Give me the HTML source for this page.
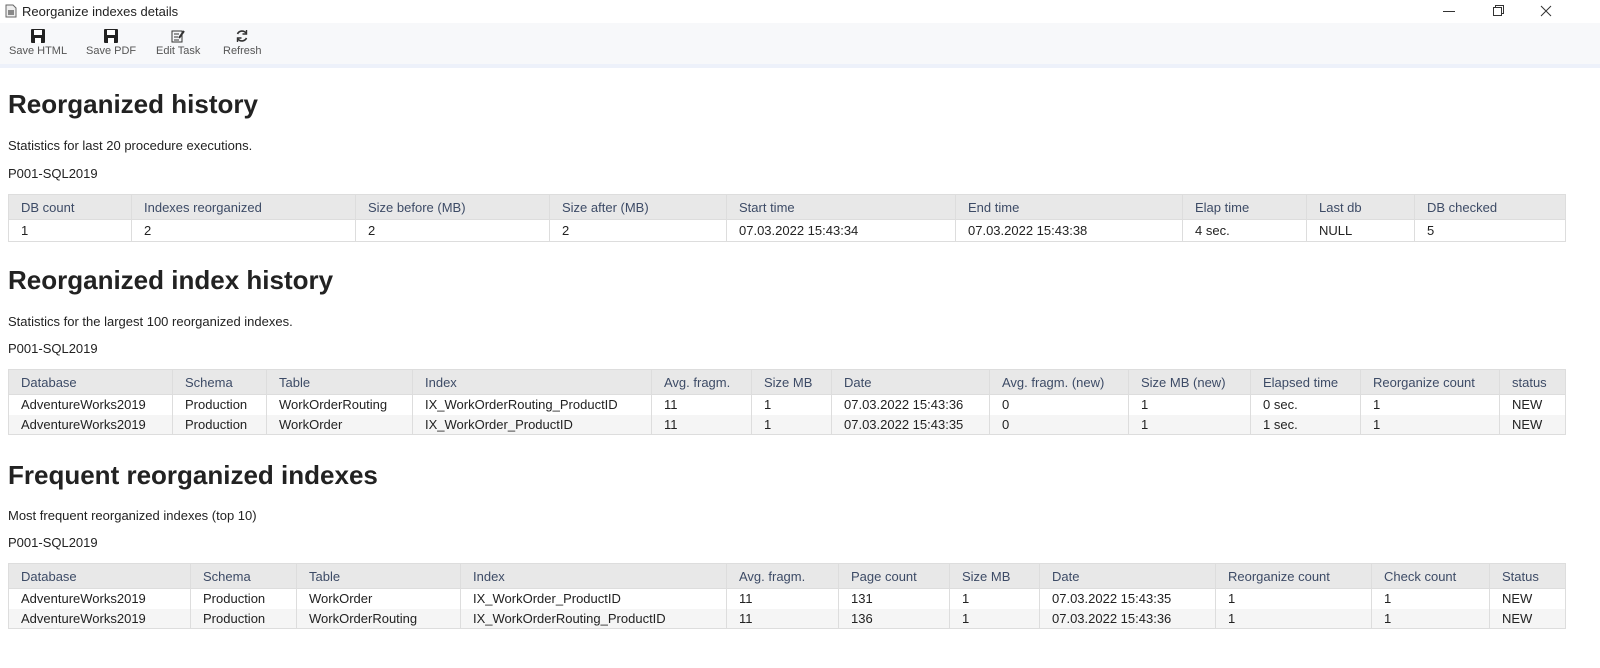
<!DOCTYPE html>
<html><head><meta charset="utf-8"><style>
*{margin:0;padding:0;box-sizing:border-box}
body{width:1600px;height:668px;background:#fff;font-family:"Liberation Sans",Arial,sans-serif;color:#222;position:relative;overflow:hidden}
.title{position:absolute;left:22px;top:4px;font-size:13px;color:#222}
.tb{position:absolute;left:0;top:23px;width:1600px;height:45px;background:#f7f8fa;border-bottom:4px solid #edf1fa}
.btn{position:absolute;top:6px;font-size:11px;color:#555;text-align:center}
.btn svg{display:block;margin:0 auto 2px}
h1{position:absolute;left:8px;font-size:26px;font-weight:bold;color:#222}
.p{position:absolute;left:8px;font-size:13px;color:#222}
table{position:absolute;left:8px;border-collapse:collapse;font-size:13px;table-layout:fixed}
th{background:#e8e8e8;color:#3d4b66;font-weight:normal;text-align:left;padding:0 12px;height:25px;border:1px solid #ddd}
td{padding:0 12px;height:20px;border-left:1px solid #ddd;border-right:1px solid #ddd;color:#222}
tr.a td{background:#fff}tr.b td{background:#f5f5f5}
tbody tr:last-child td{border-bottom:1px solid #ddd}
</style></head><body>
<svg style="position:absolute;left:5px;top:4px" width="12" height="14" viewBox="0 0 12 14"><path d="M1 1h7l3 3v9H1z" fill="#eee" stroke="#666"/><rect x="3" y="6" width="6" height="5" fill="#888"/></svg>
<div class="title">Reorganize indexes details</div>
<svg style="position:absolute;left:1443px;top:11px" width="12" height="2"><rect width="12" height="1" fill="#333"/></svg>
<svg style="position:absolute;left:1493px;top:5px" width="12" height="12"><rect x="0.5" y="2.5" width="8" height="8" fill="none" stroke="#333"/><path d="M2.5 2.5V0.5h8v8h-2" fill="none" stroke="#333"/></svg>
<svg style="position:absolute;left:1540px;top:5px" width="12" height="12"><path d="M1 1L11 11M11 1L1 11" stroke="#333" stroke-width="1"/></svg>
<div class="tb">
<div class="btn" style="left:9px"><svg width="14" height="14"><rect width="14" height="14" rx="1" fill="#222"/><rect x="3" y="1" width="8" height="5" fill="#fff"/><rect x="4" y="9" width="6" height="5" fill="#fff"/></svg>Save HTML</div>
<div class="btn" style="left:86px"><svg width="14" height="14"><rect width="14" height="14" rx="1" fill="#222"/><rect x="3" y="1" width="8" height="5" fill="#fff"/><rect x="4" y="9" width="6" height="5" fill="#fff"/></svg>Save PDF</div>
<div class="btn" style="left:156px"><svg width="14" height="14"><rect x="1" y="2" width="10" height="11" fill="none" stroke="#333"/><path d="M3 5h5M3 8h4M3 11h5" stroke="#333"/><path d="M8 9l5-7" stroke="#333" stroke-width="2"/></svg>Edit Task</div>
<div class="btn" style="left:223px"><svg width="14" height="14"><path d="M11 4A5 5 0 0 0 2.5 5M3 10A5 5 0 0 0 11.5 9" fill="none" stroke="#333" stroke-width="1.6"/><path d="M11.5 1v4h-4M2.5 13V9h4" fill="none" stroke="#333" stroke-width="1.4"/></svg>Refresh</div>
</div>

<h1 style="top:89px">Reorganized history</h1>
<div class="p" style="top:138px">Statistics for last 20 procedure executions.</div>
<div class="p" style="top:166px">P001-SQL2019</div>
<table style="top:194px;width:1557px">
<colgroup><col style="width:123px"><col style="width:224px"><col style="width:194px"><col style="width:177px"><col style="width:229px"><col style="width:227px"><col style="width:124px"><col style="width:108px"><col style="width:151px"></colgroup>
<thead><tr><th>DB count</th><th>Indexes reorganized</th><th>Size before (MB)</th><th>Size after (MB)</th><th>Start time</th><th>End time</th><th>Elap time</th><th>Last db</th><th>DB checked</th></tr></thead>
<tbody><tr class="a" style="height:22px"><td>1</td><td>2</td><td>2</td><td>2</td><td>07.03.2022 15:43:34</td><td>07.03.2022 15:43:38</td><td>4 sec.</td><td>NULL</td><td>5</td></tr></tbody></table>

<h1 style="top:265px">Reorganized index history</h1>
<div class="p" style="top:314px">Statistics for the largest 100 reorganized indexes.</div>
<div class="p" style="top:341px">P001-SQL2019</div>
<table style="top:369px;width:1557px">
<colgroup><col style="width:164px"><col style="width:94px"><col style="width:146px"><col style="width:239px"><col style="width:100px"><col style="width:80px"><col style="width:158px"><col style="width:139px"><col style="width:122px"><col style="width:110px"><col style="width:139px"><col style="width:66px"></colgroup>
<thead><tr><th>Database</th><th>Schema</th><th>Table</th><th>Index</th><th>Avg. fragm.</th><th>Size MB</th><th>Date</th><th>Avg. fragm. (new)</th><th>Size MB (new)</th><th>Elapsed time</th><th>Reorganize count</th><th>status</th></tr></thead>
<tbody>
<tr class="a"><td>AdventureWorks2019</td><td>Production</td><td>WorkOrderRouting</td><td>IX_WorkOrderRouting_ProductID</td><td>11</td><td>1</td><td>07.03.2022 15:43:36</td><td>0</td><td>1</td><td>0 sec.</td><td>1</td><td>NEW</td></tr>
<tr class="b"><td>AdventureWorks2019</td><td>Production</td><td>WorkOrder</td><td>IX_WorkOrder_ProductID</td><td>11</td><td>1</td><td>07.03.2022 15:43:35</td><td>0</td><td>1</td><td>1 sec.</td><td>1</td><td>NEW</td></tr>
</tbody></table>

<h1 style="top:460px">Frequent reorganized indexes</h1>
<div class="p" style="top:508px">Most frequent reorganized indexes (top 10)</div>
<div class="p" style="top:535px">P001-SQL2019</div>
<table style="top:563px;width:1557px">
<colgroup><col style="width:182px"><col style="width:106px"><col style="width:164px"><col style="width:266px"><col style="width:112px"><col style="width:111px"><col style="width:90px"><col style="width:176px"><col style="width:156px"><col style="width:118px"><col style="width:76px"></colgroup>
<thead><tr><th>Database</th><th>Schema</th><th>Table</th><th>Index</th><th>Avg. fragm.</th><th>Page count</th><th>Size MB</th><th>Date</th><th>Reorganize count</th><th>Check count</th><th>Status</th></tr></thead>
<tbody>
<tr class="a"><td>AdventureWorks2019</td><td>Production</td><td>WorkOrder</td><td>IX_WorkOrder_ProductID</td><td>11</td><td>131</td><td>1</td><td>07.03.2022 15:43:35</td><td>1</td><td>1</td><td>NEW</td></tr>
<tr class="b"><td>AdventureWorks2019</td><td>Production</td><td>WorkOrderRouting</td><td>IX_WorkOrderRouting_ProductID</td><td>11</td><td>136</td><td>1</td><td>07.03.2022 15:43:36</td><td>1</td><td>1</td><td>NEW</td></tr>
</tbody></table>
</body></html>
